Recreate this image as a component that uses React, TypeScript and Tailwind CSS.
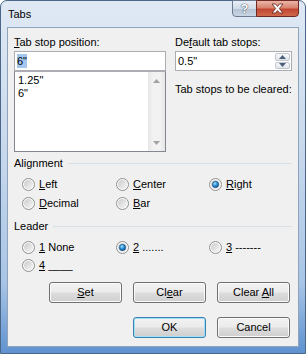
import React from "react";

function Radio({ checked }: { checked?: boolean }) {
  return (
    <svg width="13" height="13" viewBox="0 0 13 13" className="shrink-0">
      <circle cx="6.5" cy="6.5" r="6" fill="#fafafa" stroke="#8e8f8f" strokeWidth="1" />
      <circle cx="6.5" cy="6.5" r="4.5" fill="url(#radioFill)" />
      {checked && <circle cx="6.5" cy="6.5" r="3.2" fill="url(#radioDot)" stroke="#19517f" strokeWidth="0.6" />}
    </svg>
  );
}

function Option({ checked, children }: { checked?: boolean; children: React.ReactNode }) {
  return (
    <div className="flex items-center gap-[4px]">
      <Radio checked={checked} />
      <span className="whitespace-pre">{children}</span>
    </div>
  );
}

function Group({ title }: { title: string }) {
  return (
    <div className="flex h-[14px] items-center gap-[5px] leading-[14px]">
      <span>{title}</span>
      <div className="h-px flex-1 bg-[#d5dfe5]" />
    </div>
  );
}

function Btn({ children, primary }: { children: React.ReactNode; primary?: boolean }) {
  return (
    <div
      className={`flex h-[21px] w-[73px] items-center justify-center rounded-[3px] border bg-[linear-gradient(#f2f2f2_0%,#ebebeb_48%,#dddddd_52%,#cfcfcf_100%)] ${
        primary ? "border-[#3c7fb1] shadow-[inset_0_0_0_1px_#9fe1f8]" : "border-[#707070] shadow-[inset_0_0_0_1px_#fbfbfb]"
      }`}
    >
      <span className="whitespace-pre">{children}</span>
    </div>
  );
}

function Arrow({ up, color = "#a3a3a3" }: { up?: boolean; color?: string }) {
  return (
    <svg width="7" height="4" viewBox="0 0 7 4">
      {up ? <path d="M0 4 L3.5 0 L7 4 Z" fill={color} /> : <path d="M0 0 L3.5 4 L7 0 Z" fill={color} />}
    </svg>
  );
}

export default function App() {
  return (
    <div className="h-[354px] w-[306px] overflow-hidden font-['Liberation_Sans',Arial,sans-serif] text-[11px] text-black">
      <svg width="0" height="0" className="absolute">
        <defs>
          <linearGradient id="radioFill" x1="0" y1="0" x2="1" y2="1">
            <stop offset="0" stopColor="#cbcbcb" />
            <stop offset="1" stopColor="#f6f6f6" />
          </linearGradient>
          <radialGradient id="radioDot" cx="0.4" cy="0.35" r="0.7">
            <stop offset="0" stopColor="#a6e3ff" />
            <stop offset="0.5" stopColor="#2a8fd4" />
            <stop offset="1" stopColor="#0f4e86" />
          </radialGradient>
        </defs>
      </svg>

      <div className="flex h-full w-full flex-col rounded-t-[7px] border border-[#4b6688] bg-[linear-gradient(#dfe9f4_0%,#c9daed_40%,#a9c5e6_80%,#5f93cf_100%)] px-[6px] pb-[6px]">
        {/* title bar */}
        <div className="flex h-[26px] items-start justify-between">
          <div className="flex h-full items-center pl-[1px] text-[11px] text-black">Tabs</div>
          <div className="flex h-[17px] -mt-px">
            <div className="flex w-[25px] items-center justify-center rounded-bl-[4px] border border-[#6b7a8e] bg-[linear-gradient(#e8eef5_0%,#d2dce8_50%,#b5c2d2_51%,#c9d6e4_100%)]">
              <span className="text-[13px] font-bold leading-none text-white [text-shadow:0_0_1px_#2c3a4c,0_0_1px_#2c3a4c]">?</span>
            </div>
            <div className="-ml-px flex w-[43px] items-center justify-center rounded-br-[4px] border border-[#6e2a22] bg-[linear-gradient(#eab5a8_0%,#d98370_45%,#c24632_55%,#cf6a4c_100%)]">
              <svg width="13" height="11" viewBox="0 0 13 11">
                <path
                  d="M1 1 L4.5 1 L6.5 3.4 L8.5 1 L12 1 L8.3 5.5 L12 10 L8.5 10 L6.5 7.6 L4.5 10 L1 10 L4.7 5.5 Z"
                  fill="#ffffff"
                  stroke="#5a2018"
                  strokeWidth="0.8"
                  strokeLinejoin="round"
                />
              </svg>
            </div>
          </div>
        </div>

        {/* client area */}
        <div className="flex flex-1 flex-col border border-[#8fa3bb] bg-[#f0f0f0] px-[6px] pt-[7px]">
          <div className="flex gap-[9px]">
            <div className="flex w-[152px] flex-col">
              <div className="mb-px h-[15px] leading-[15px]">
                <u>T</u>ab stop position:
              </div>
              <div className="flex h-[20px] items-center border border-[#abadb3] bg-white pl-[2px]">
                <span className="bg-[#a3c6ee] leading-[14px]">6"</span>
              </div>
              <div className="flex h-[81px] border border-[#828790] border-t-[#abadb3] bg-white">
                <div className="flex-1 pl-[3px] pt-[2px] leading-[13px]">
                  <div>1.25"</div>
                  <div>6"</div>
                </div>
                <div className="flex w-[17px] flex-col justify-between bg-[linear-gradient(90deg,#e6e6e6,#f2f2f2_30%,#f2f2f2_70%,#e6e6e6)]">
                  <div className="flex h-[17px] items-center justify-center">
                    <Arrow up />
                  </div>
                  <div className="flex h-[17px] items-center justify-center">
                    <Arrow />
                  </div>
                </div>
              </div>
            </div>

            <div className="flex flex-1 flex-col">
              <div className="mb-px h-[15px] leading-[15px]">
                De<u>f</u>ault tab stops:
              </div>
              <div className="flex h-[20px] items-center justify-between border border-[#abadb3] bg-white pl-[2px]">
                <span>0.5"</span>
                <div className="flex h-full w-[16px] flex-col gap-px py-px pr-px">
                  <div className="flex flex-1 items-center justify-center rounded-[2px] border border-[#c3c8cf] bg-[linear-gradient(#f7f8fa,#e1e6ec)]">
                    <Arrow up color="#4d5f7a" />
                  </div>
                  <div className="flex flex-1 items-center justify-center rounded-[2px] border border-[#c3c8cf] bg-[linear-gradient(#f7f8fa,#e1e6ec)]">
                    <Arrow color="#4d5f7a" />
                  </div>
                </div>
              </div>
              <div className="mt-[11px] h-[15px] leading-[15px]">Tab stops to be cleared:</div>
            </div>
          </div>

          <div className="mt-[4px]">
            <Group title="Alignment" />
          </div>
          <div className="mt-[5px] ml-[8px] grid grid-cols-[94px_93px_1fr]">
            <div className="flex h-[19px] items-center">
              <Option>
                <u>L</u>eft
              </Option>
            </div>
            <div className="flex h-[19px] items-center">
              <Option>
                <u>C</u>enter
              </Option>
            </div>
            <div className="flex h-[19px] items-center">
              <Option checked>
                <u>R</u>ight
              </Option>
            </div>
            <div className="flex h-[19px] items-center">
              <Option>
                <u>D</u>ecimal
              </Option>
            </div>
            <div className="flex h-[19px] items-center">
              <Option>
                <u>B</u>ar
              </Option>
            </div>
          </div>

          <div className="mt-[6px]">
            <Group title="Leader" />
          </div>
          <div className="mt-[5px] ml-[8px] grid grid-cols-[94px_93px_1fr]">
            <div className="flex h-[18px] items-center">
              <Option>
                <u>1</u> None
              </Option>
            </div>
            <div className="flex h-[18px] items-center">
              <Option checked>
                <u>2</u> .......
              </Option>
            </div>
            <div className="flex h-[18px] items-center">
              <Option>
                <u>3</u> -------
              </Option>
            </div>
            <div className="flex h-[18px] items-center">
              <Option>
                <u>4</u> ____
              </Option>
            </div>
          </div>

          <div className="mt-[8px] mr-[2px] flex justify-end gap-[11px]">
            <Btn>
              <u>S</u>et
            </Btn>
            <Btn>
              Cl<u>e</u>ar
            </Btn>
            <Btn>
              Clear <u>A</u>ll
            </Btn>
          </div>
          <div className="mt-[14px] mr-[2px] flex justify-end gap-[11px]">
            <Btn primary>OK</Btn>
            <Btn>Cancel</Btn>
          </div>
        </div>
      </div>
    </div>
  );
}
